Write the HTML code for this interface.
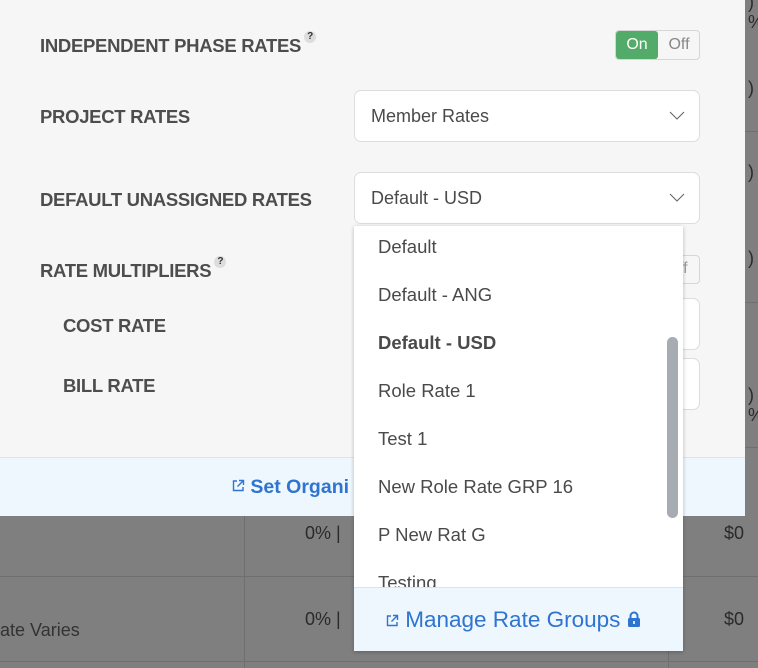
<!DOCTYPE html>
<html><head><meta charset="utf-8"><style>
*{box-sizing:border-box;margin:0;padding:0}
body{width:758px;height:668px;overflow:hidden;position:relative;background:#7f7f7f;font-family:"Liberation Sans",sans-serif;color:#4a4a4a}
.abs{position:absolute}
.panel{left:0;top:0;width:745px;height:457px;background:#f6f6f6}
.lbl{position:absolute;font-size:18.5px;font-weight:bold;color:#4d4d4d;letter-spacing:-0.3px;white-space:nowrap}
.q{display:inline-block;width:12px;height:12px;border-radius:50%;background:#ddd;font-size:10px;text-align:center;line-height:12px;vertical-align:top;margin-left:3px;margin-top:-4px;color:#333;font-weight:bold}
.sel{position:absolute;left:354px;width:346px;height:52px;background:#fff;border:1px solid #ddd;border-radius:7px;font-size:18px;color:#4a4a4a;padding:15px 0 0 16px}
.chev{position:absolute;right:14px;top:20px}
.band{left:0;top:457px;width:745px;height:59px;background:#eef6fe;border-top:1px solid #dfe3e8}
.dd{left:354px;top:226px;width:329px;height:425px;background:#fff;box-shadow:0 1px 4px rgba(0,0,0,.25);overflow:hidden}
.it{position:absolute;left:24px;font-size:18.5px;color:#4a4a4a;white-space:nowrap}
.line{position:absolute;background:#6f6f6f}
.gt{position:absolute;font-size:18px;color:#2a2a2a}
</style></head><body>
<div class="line" style="left:244px;top:516px;width:1px;height:152px"></div>
<div class="line" style="left:668px;top:516px;width:1px;height:152px"></div>
<div class="line" style="left:0;top:576px;width:758px;height:1px"></div>
<div class="line" style="left:0;top:661px;width:758px;height:1px"></div>
<div class="line" style="left:745px;top:131px;width:13px;height:1px"></div>
<div class="line" style="left:745px;top:302px;width:13px;height:1px"></div>
<div class="line" style="left:745px;top:447px;width:13px;height:1px"></div>
<div class="gt" style="left:305px;top:523px">0% |</div>
<div class="gt" style="left:305px;top:609px">0% |</div>
<div class="gt" style="left:724px;top:523px">$0</div>
<div class="gt" style="left:724px;top:609px">$0</div>
<div class="gt" style="left:0;top:620px;color:#333">ate Varies</div>
<div class="gt" style="left:748px;top:-8px">)</div>
<div class="gt" style="left:748px;top:12px">%</div>
<div class="gt" style="left:748px;top:78px">)</div>
<div class="gt" style="left:748px;top:162px">)</div>
<div class="gt" style="left:748px;top:248px">)</div>
<div class="gt" style="left:748px;top:385px">)</div>
<div class="gt" style="left:748px;top:405px">%</div>

<div class="abs panel"></div>
<div class="lbl" style="left:40px;top:35px">INDEPENDENT PHASE RATES<span class="q">?</span></div>
<div class="abs" style="left:615px;top:30px;width:85px;height:30px;border:1px solid #d6d6d6;border-radius:4px;background:#f6f6f6;overflow:hidden">
 <div class="abs" style="left:0;top:0;width:42px;height:28px;background:#52ab68;color:#fff;font-size:16px;text-align:center;line-height:28px;border-radius:3px">On</div>
 <div class="abs" style="left:42px;top:0;width:42px;height:28px;color:#888;font-size:16px;text-align:center;line-height:28px">Off</div>
</div>
<div class="lbl" style="left:40px;top:106px">PROJECT RATES</div>
<div class="sel" style="top:90px">Member Rates<svg class="chev" width="16" height="10" viewBox="0 0 16 10"><path d="M1 1l7 7 7-7" fill="none" stroke="#666" stroke-width="1.1"/></svg></div>
<div class="lbl" style="left:40px;top:189px">DEFAULT UNASSIGNED RATES</div>
<div class="sel" style="top:172px">Default - USD<svg class="chev" width="16" height="10" viewBox="0 0 16 10"><path d="M1 1l7 7 7-7" fill="none" stroke="#666" stroke-width="1.1"/></svg></div>
<div class="lbl" style="left:40px;top:260px">RATE MULTIPLIERS<span class="q">?</span></div>
<div class="lbl" style="left:63px;top:315px">COST RATE</div>
<div class="lbl" style="left:63px;top:375px">BILL RATE</div>
<div class="abs" style="left:660px;top:255px;width:40px;height:29px;border:1px solid #d6d6d6;border-radius:4px;color:#999;font-size:16px;padding:4px 0 0 18px">ff</div>
<div class="abs" style="left:640px;top:298px;width:60px;height:52px;border:1px solid #ddd;border-radius:7px;background:#fff"></div>
<div class="abs" style="left:640px;top:358px;width:60px;height:52px;border:1px solid #ddd;border-radius:7px;background:#fff"></div>

<div class="abs band"></div>
<div class="abs" style="left:232px;top:476px;color:#2e74d0;font-size:19.5px;font-weight:bold;white-space:nowrap">
<svg width="13" height="13" viewBox="0 0 13 13" style="vertical-align:1px"><path d="M5 2H1.5v9.5H11V8M7 1.5h4.5V6M11.5 1.5L5.5 7.5" fill="none" stroke="#2e74d0" stroke-width="1.4"/></svg> Set Organi</div>

<div class="abs dd">
 <div class="it" style="top:10px">Default</div>
 <div class="it" style="top:58px">Default - ANG</div>
 <div class="it" style="top:106px;font-weight:bold">Default - USD</div>
 <div class="it" style="top:154px">Role Rate 1</div>
 <div class="it" style="top:202px">Test 1</div>
 <div class="it" style="top:250px">New Role Rate GRP 16</div>
 <div class="it" style="top:298px">P New Rat G</div>
 <div class="it" style="top:346px">Testing</div>
 <div class="abs" style="left:313px;top:111px;width:11px;height:181px;background:#a7abb2;border-radius:6px"></div>
 <div class="abs" style="left:0;top:361px;width:329px;height:64px;background:#eef6fe;border-top:1px solid #dde3ea;color:#2e74d0;font-size:22.5px;padding:19px 0 0 32px;white-space:nowrap">
  <svg width="13" height="13" viewBox="0 0 13 13"><path d="M5 2H1.5v9.5H11V8M7 1.5h4.5V6M11.5 1.5L5.5 7.5" fill="none" stroke="#2e74d0" stroke-width="1.4"/></svg> Manage Rate Groups <svg width="14" height="17" viewBox="0 0 14 17" style="vertical-align:-1px"><path d="M3.5 7V5a3.5 3.5 0 0 1 7 0v2" fill="none" stroke="#2e74d0" stroke-width="2"/><rect x="1" y="7" width="12" height="9" rx="1.5" fill="#2e74d0"/><rect x="6.2" y="10" width="1.6" height="3" fill="#fff"/></svg>
 </div>
</div>
</body></html>
